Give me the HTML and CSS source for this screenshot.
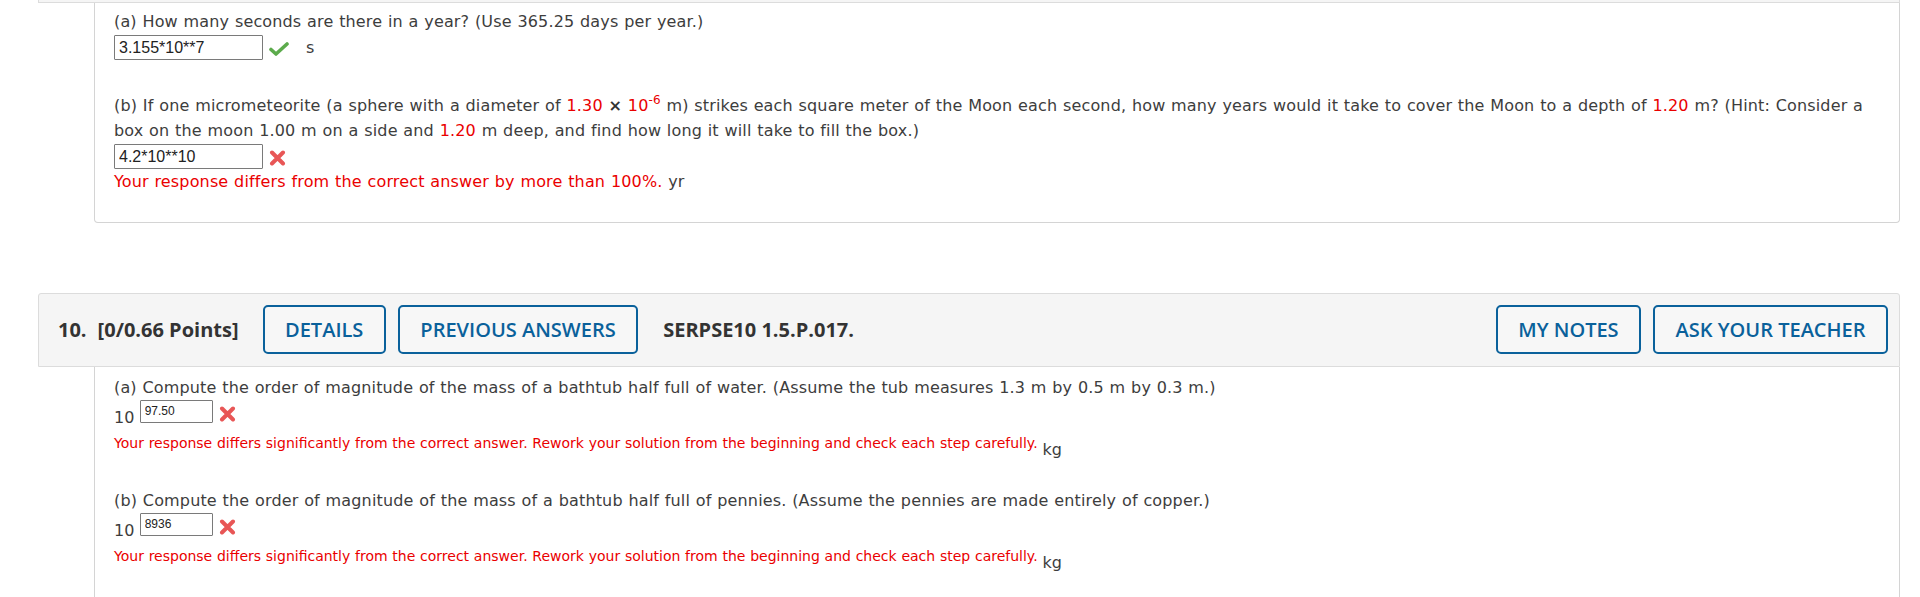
FILE: index.html
```html
<!DOCTYPE html>
<html>
<head>
<meta charset="utf-8">
<link rel="stylesheet" href="styles.css">
</head>
<body>
<div class="page">
  <div class="question prev">
    <div class="prev-header"></div>
    <div class="qbody">
      <p class="part">(a) How many seconds are there in a year? (Use 365.25 days per year.)</p>
      <div class="answer-row">
        <input class="answer" type="text" value="3.155*10**7">
        <svg class="icon-check" width="20" height="14" viewBox="0 0 20 14"><path d="M2 7.5 L7 12 L18 2" fill="none" stroke="#5cab4c" stroke-width="3.6" stroke-linecap="round" stroke-linejoin="round"/></svg>
        <span class="unit">s</span>
      </div>
      <p class="part part-b">(b) If one micrometeorite (a sphere with a diameter of <span class="red">1.30</span> <b class="times">&times;</b> <span class="red">10<sup>-6</sup></span> m) strikes each square meter of the Moon each second, how many years would it take to cover the Moon to a depth of <span class="red">1.20</span> m? (Hint: Consider a box on the moon 1.00 m on a side and <span class="red">1.20</span> m deep, and find how long it will take to fill the box.)</p>
      <div class="answer-row">
        <input class="answer" type="text" value="4.2*10**10">
        <svg class="icon-cross" width="17" height="16" viewBox="0 0 17 16"><path d="M3 2.5 L14 13.5 M14 2.5 L3 13.5" fill="none" stroke="#e85656" stroke-width="4" stroke-linecap="round"/></svg>
      </div>
      <p class="feedback"><span class="red">Your response differs from the correct answer by more than 100%.</span> yr</p>
    </div>
  </div>

  <div class="question">
    <div class="qheader">
      <span class="qnum">10.</span>
      <span class="qpoints">[0/0.66 Points]</span>
      <button class="btn btn-details">DETAILS</button>
      <button class="btn btn-prev">PREVIOUS ANSWERS</button>
      <span class="qcode">SERPSE10 1.5.P.017.</span>
      <button class="btn btn-notes">MY NOTES</button>
      <button class="btn">ASK YOUR TEACHER</button>
    </div>
    <div class="qbody qbody-10">
      <p class="part">(a) Compute the order of magnitude of the mass of a bathtub half full of water. (Assume the tub measures 1.3 m by 0.5 m by 0.3 m.)</p>
      <div class="exp-row">
        <span class="base">10</span>
        <input class="exp" type="text" value="97.50">
        <svg class="icon-cross small" width="17" height="16" viewBox="0 0 17 16"><path d="M3 2.5 L14 13.5 M14 2.5 L3 13.5" fill="none" stroke="#e85656" stroke-width="4" stroke-linecap="round"/></svg>
      </div>
      <div class="msg"><span class="red">Your response differs significantly from the correct answer. Rework your solution from the beginning and check each step carefully.</span> <span class="msg-unit">kg</span></div>

      <p class="part part-b2">(b) Compute the order of magnitude of the mass of a bathtub half full of pennies. (Assume the pennies are made entirely of copper.)</p>
      <div class="exp-row">
        <span class="base">10</span>
        <input class="exp" type="text" value="8936">
        <svg class="icon-cross small" width="17" height="16" viewBox="0 0 17 16"><path d="M3 2.5 L14 13.5 M14 2.5 L3 13.5" fill="none" stroke="#e85656" stroke-width="4" stroke-linecap="round"/></svg>
      </div>
      <div class="msg"><span class="red">Your response differs significantly from the correct answer. Rework your solution from the beginning and check each step carefully.</span> <span class="msg-unit">kg</span></div>
    </div>
  </div>
</div>
</body>
</html>
```

FILE: styles.css
```css
* { box-sizing: border-box; }
html, body { margin: 0; padding: 0; background: #fff; }
body {
  font-family: "DejaVu Sans", Verdana, sans-serif;
  font-size: 16px;
  color: #3d3d3d;
}
.page {
  padding-left: 38px;
  width: 1900px;
}
.prev-header {
  height: 3px;
  background: #f5f5f5;
  border: 1px solid #dcdcdc;
  border-top: none;
}
.qbody {
  margin-left: 56px;
  border: 1px solid #d4d4d4;
  border-top: none;
  border-radius: 0 0 4px 4px;
  padding: 6px 25px 27.5px 19px;
  letter-spacing: 0.15px;
  word-spacing: 0.5px;
}
.part {
  margin: 0;
  line-height: 25px;
}
.part-b { margin-top: 33px; }
.red { color: #ea0000; }
.times { color: #333; font-weight: bold; }
sup { font-size: 12px; line-height: 0; vertical-align: 7px; }
.answer-row {
  display: flex;
  align-items: center;
  margin-top: 1px;
  height: 25px;
}
.answer {
  width: 149px;
  height: 25px;
  border: 1px solid #7a7a7a;
  border-radius: 1px;
  padding: 0 4px;
  font-family: "Liberation Sans", Arial, sans-serif;
  font-size: 16px;
  color: #222;
  background: #fff;
  margin: 0;
}
.icon-check { margin-left: 6px; margin-top: 2px; }
.icon-cross { margin-left: 6px; margin-top: 3px; }
.unit { margin-left: 17px; }
.feedback {
  margin: 0;
  line-height: 25px;
}
.question + .question { margin-top: 70px; }
.qheader {
  display: flex;
  align-items: center;
  height: 74px;
  background: #f5f5f5;
  border: 1px solid #dcdcdc;
  border-radius: 3px 3px 0 0;
  padding: 0 11px 0 19px;
  font-family: "Open Sans", sans-serif;
  color: #333;
}
.qnum { font-weight: 700; font-size: 20px; margin-right: 11px; }
.qpoints { font-weight: 700; font-size: 20px; margin-right: 24px; }
.qcode { font-weight: 700; font-size: 20px; margin-left: 25px; }
.btn {
  height: 49px;
  padding: 0 20.5px;
  border: 2px solid #0a619b;
  border-radius: 5px;
  background: #f7f7f7;
  color: #0a619b;
  font-family: "Open Sans", sans-serif;
  font-weight: 600;
  font-size: 20px;
  margin: 0 0 0 12px;
  cursor: pointer;
}
.btn-details { margin-left: 0; }
.btn-notes { margin-left: auto; }
.qbody-10 { padding-top: 8px; padding-bottom: 30px; }
.exp-row {
  display: flex;
  align-items: flex-start;
  height: 23px;
}
.base {
  line-height: 19px;
  margin-top: 8px;
  margin-right: 5px;
}
.exp {
  width: 73px;
  height: 23px;
  border: 1px solid #7a7a7a;
  border-radius: 1px;
  padding: 0 4px;
  font-family: "Liberation Sans", Arial, sans-serif;
  font-size: 12px;
  color: #222;
  background: #fff;
  margin: 0;
}
.icon-cross.small { margin-top: 6px; }
.msg {
  margin-top: 10.5px;
  font-size: 14px;
  line-height: 20px;
  letter-spacing: 0;
  word-spacing: 0.3px;
}
.msg-unit {
  font-size: 16px;
  vertical-align: -6.6px;
}
.part-b2 { margin-top: 28px; }
```
